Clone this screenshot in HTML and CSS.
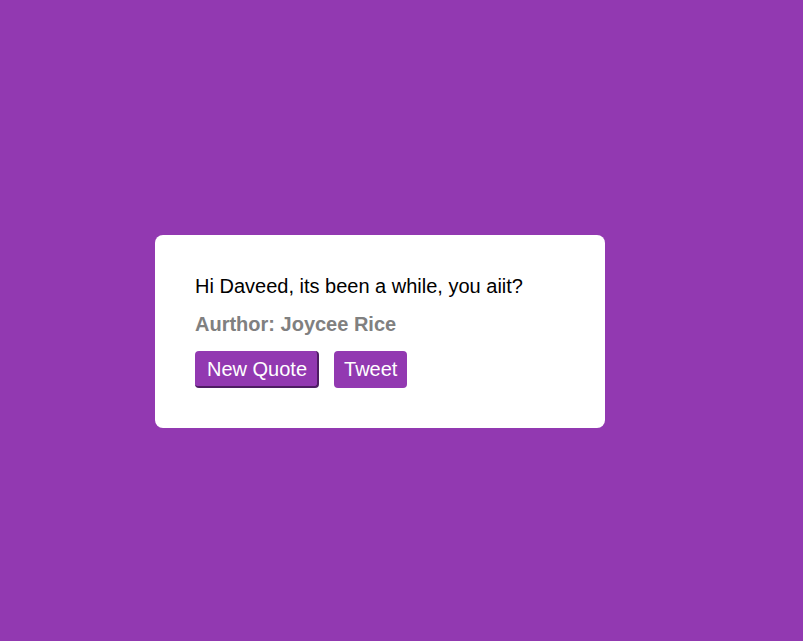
FILE: index.html
```html
<!DOCTYPE html>
<html>
<head>
<meta charset="utf-8">
<link rel="stylesheet" href="styles.css">
</head>
<body>
<div class="page">
  <div class="card">
    <p class="quote">Hi Daveed, its been a while, you aiit?</p>
    <p class="author">Aurthor: Joycee Rice</p>
    <div class="actions">
      <button class="btn btn-new">New Quote</button>
      <button class="btn">Tweet</button>
    </div>
  </div>
</div>
</body>
</html>
```
FILE: styles.css
```css
html, body {
  margin: 0;
  padding: 0;
  background: #9239b1;
  font-family: "Liberation Sans", Arial, sans-serif;
}
.page {
  min-height: 641px;
  padding: 235px 0 0 155px;
  box-sizing: border-box;
}
.card {
  width: 450px;
  box-sizing: border-box;
  background: #fff;
  border-radius: 8px;
  padding: 40px;
}
.quote {
  margin: 0;
  font-size: 20px;
  line-height: 23px;
  color: #000;
}
.author {
  margin: 15px 0 0 0;
  font-size: 20px;
  line-height: 23px;
  font-weight: bold;
  color: #808080;
}
.actions {
  margin-top: 15px;
  display: flex;
  gap: 15px;
}
.btn {
  font-family: "Liberation Sans", Arial, sans-serif;
  font-size: 20px;
  line-height: 23px;
  color: #fff;
  background: #9239b1;
  border: none;
  border-radius: 4px;
  padding: 7px 10px;
  height: 37px;
  box-sizing: border-box;
}
.btn-new {
  padding: 7px 10px 5px 12px;
  border-right: 2px solid #4e1d63;
  border-bottom: 2px solid #4e1d63;
}
```
